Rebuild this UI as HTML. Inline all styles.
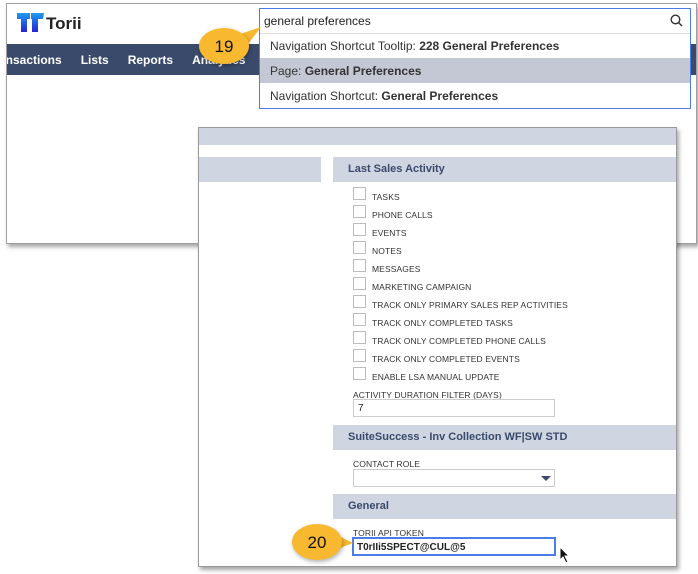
<!DOCTYPE html>
<html><head><meta charset="utf-8"><style>
*{margin:0;padding:0;box-sizing:border-box}
body{width:698px;height:574px;background:#fff;position:relative;overflow:hidden;font-family:"Liberation Sans",sans-serif}
.abs{position:absolute}
.cb{position:absolute;left:353px;width:13px;height:13px;border:1px solid #bbb;background:#fff}
.lb{position:absolute;left:372px;font-size:8.5px;color:#333;letter-spacing:0.1px}
.hdr{position:absolute;left:333px;width:343px;height:25px;background:#cfd5e1;color:#3a4a6b;font-weight:bold;font-size:11px;padding:0 0 0 15px;line-height:25px}
</style></head><body>
<div class="abs" style="left:6px;top:3px;width:691px;height:241px;border:1px solid #a0a0a0;box-shadow:2px 3px 4px rgba(0,0,0,.35);background:#fff"></div>
<svg class="abs" style="left:17px;top:13px" width="27" height="19" viewBox="0 0 27 19">
<defs><linearGradient id="g" x1="0" y1="0" x2="0" y2="1"><stop offset="0" stop-color="#1f9bf0"/><stop offset="1" stop-color="#2424d0"/></linearGradient></defs>
<path d="M0 0H13V6H10V19H4V6H0Z M14 0H27L26 6H21V19H15V6H14Z" fill="url(#g)"/></svg>
<div class="abs" style="left:46px;top:14px;font-size:17px;font-weight:bold;color:#222">Torii</div>
<div class="abs" style="left:7px;top:44px;width:689px;height:31px;background:#3a4a6b"></div>
<div class="abs" style="left:7px;top:53px;font-size:12px;font-weight:bold;color:#fff;white-space:nowrap;width:250px;overflow:hidden">
<span style="margin-left:-8px">ansactions</span><span style="margin-left:19px">Lists</span><span style="margin-left:19px">Reports</span><span style="margin-left:19px">Analytics</span></div>
<div class="abs" style="left:259px;top:8px;width:432px;height:101px;border:1px solid #4a7de8;background:#fff"></div>
<div class="abs" style="left:264px;top:14px;font-size:12px;color:#222">general preferences</div>
<svg class="abs" style="left:670px;top:14px" width="13" height="13" viewBox="0 0 13 13"><circle cx="5.5" cy="5.5" r="4.3" fill="none" stroke="#333" stroke-width="1.4"/><path d="M8.6 8.6L12 12" stroke="#333" stroke-width="1.5"/></svg>
<div class="abs" style="left:260px;top:33px;width:430px;height:1px;background:#ddd"></div>
<div class="abs" style="left:260px;top:58px;width:430px;height:25px;background:#c3c8d4"></div>
<div class="abs" style="left:270px;top:39px;font-size:12px;color:#333">Navigation Shortcut Tooltip: <b>228 General Preferences</b></div>
<div class="abs" style="left:270px;top:64px;font-size:12px;color:#333">Page: <b>General Preferences</b></div>
<div class="abs" style="left:270px;top:89px;font-size:12px;color:#333">Navigation Shortcut: <b>General Preferences</b></div>
<div class="abs" style="left:198px;top:127px;width:479px;height:440px;border:1px solid #999;box-shadow:2px 3px 4px rgba(0,0,0,.35);background:#fff"></div>
<div class="abs" style="left:199px;top:128px;width:477px;height:17px;background:#cfd5e1"></div>
<div class="abs" style="left:199px;top:157px;width:122px;height:25px;background:#cfd5e1"></div>
<div class="hdr" style="top:157px">Last Sales Activity</div>
<div class="cb" style="top:187px"></div><div class="lb" style="top:192px">TASKS</div>
<div class="cb" style="top:205px"></div><div class="lb" style="top:210px">PHONE CALLS</div>
<div class="cb" style="top:223px"></div><div class="lb" style="top:228px">EVENTS</div>
<div class="cb" style="top:241px"></div><div class="lb" style="top:246px">NOTES</div>
<div class="cb" style="top:259px"></div><div class="lb" style="top:264px">MESSAGES</div>
<div class="cb" style="top:277px"></div><div class="lb" style="top:282px">MARKETING CAMPAIGN</div>
<div class="cb" style="top:295px"></div><div class="lb" style="top:300px">TRACK ONLY PRIMARY SALES REP ACTIVITIES</div>
<div class="cb" style="top:313px"></div><div class="lb" style="top:318px">TRACK ONLY COMPLETED TASKS</div>
<div class="cb" style="top:331px"></div><div class="lb" style="top:336px">TRACK ONLY COMPLETED PHONE CALLS</div>
<div class="cb" style="top:349px"></div><div class="lb" style="top:354px">TRACK ONLY COMPLETED EVENTS</div>
<div class="cb" style="top:367px"></div><div class="lb" style="top:372px">ENABLE LSA MANUAL UPDATE</div>
<div class="lb" style="left:353px;top:390px">ACTIVITY DURATION FILTER (DAYS)</div>
<div class="abs" style="left:353px;top:399px;width:202px;height:18px;border:1px solid #ccc;font-size:10px;padding:3px 0 0 4px;color:#222">7</div>
<div class="hdr" style="top:425px">SuiteSuccess - Inv Collection WF|SW STD</div>
<div class="lb" style="left:353px;top:459px">CONTACT ROLE</div>
<div class="abs" style="left:353px;top:469px;width:202px;height:18px;border:1px solid #ccc"></div>
<div class="abs" style="left:541px;top:476px;width:0;height:0;border-left:5px solid transparent;border-right:5px solid transparent;border-top:5px solid #3a4a6b"></div>
<div class="hdr" style="top:494px">General</div>
<div class="lb" style="left:353px;top:528px">TORII API TOKEN</div>
<div class="abs" style="left:352px;top:537px;width:204px;height:19px;border:2px solid #4a7de8;font-size:10px;font-weight:bold;padding:3px 0 0 3px;color:#222">T0rIIi5SPECT@CUL@5</div>
<svg class="abs" style="left:559px;top:546px" width="12" height="18" viewBox="0 0 12 18"><path d="M1 1V14L4 11L7 17L9 16L6 10H10Z" fill="#111" stroke="#fff" stroke-width="1"/></svg>
<svg class="abs" style="left:190px;top:22px" width="75" height="50" viewBox="0 0 75 50"><path d="M44 14L71 5L52 30Z" fill="#f8b830"/><ellipse cx="34" cy="24" rx="25" ry="18" fill="#f8b830" style="filter:drop-shadow(1px 2px 2px rgba(0,0,0,.3))"/><text x="34" y="30" font-size="17" text-anchor="middle" font-family="Liberation Sans" fill="#111">19</text></svg>
<svg class="abs" style="left:285px;top:520px" width="75" height="50" viewBox="0 0 75 50"><path d="M50 14L68 23L50 30Z" fill="#f8b830"/><ellipse cx="32" cy="22" rx="25" ry="18" fill="#f8b830" style="filter:drop-shadow(1px 2px 2px rgba(0,0,0,.3))"/><text x="32" y="28" font-size="17" text-anchor="middle" font-family="Liberation Sans" fill="#111">20</text></svg>
</body></html>
